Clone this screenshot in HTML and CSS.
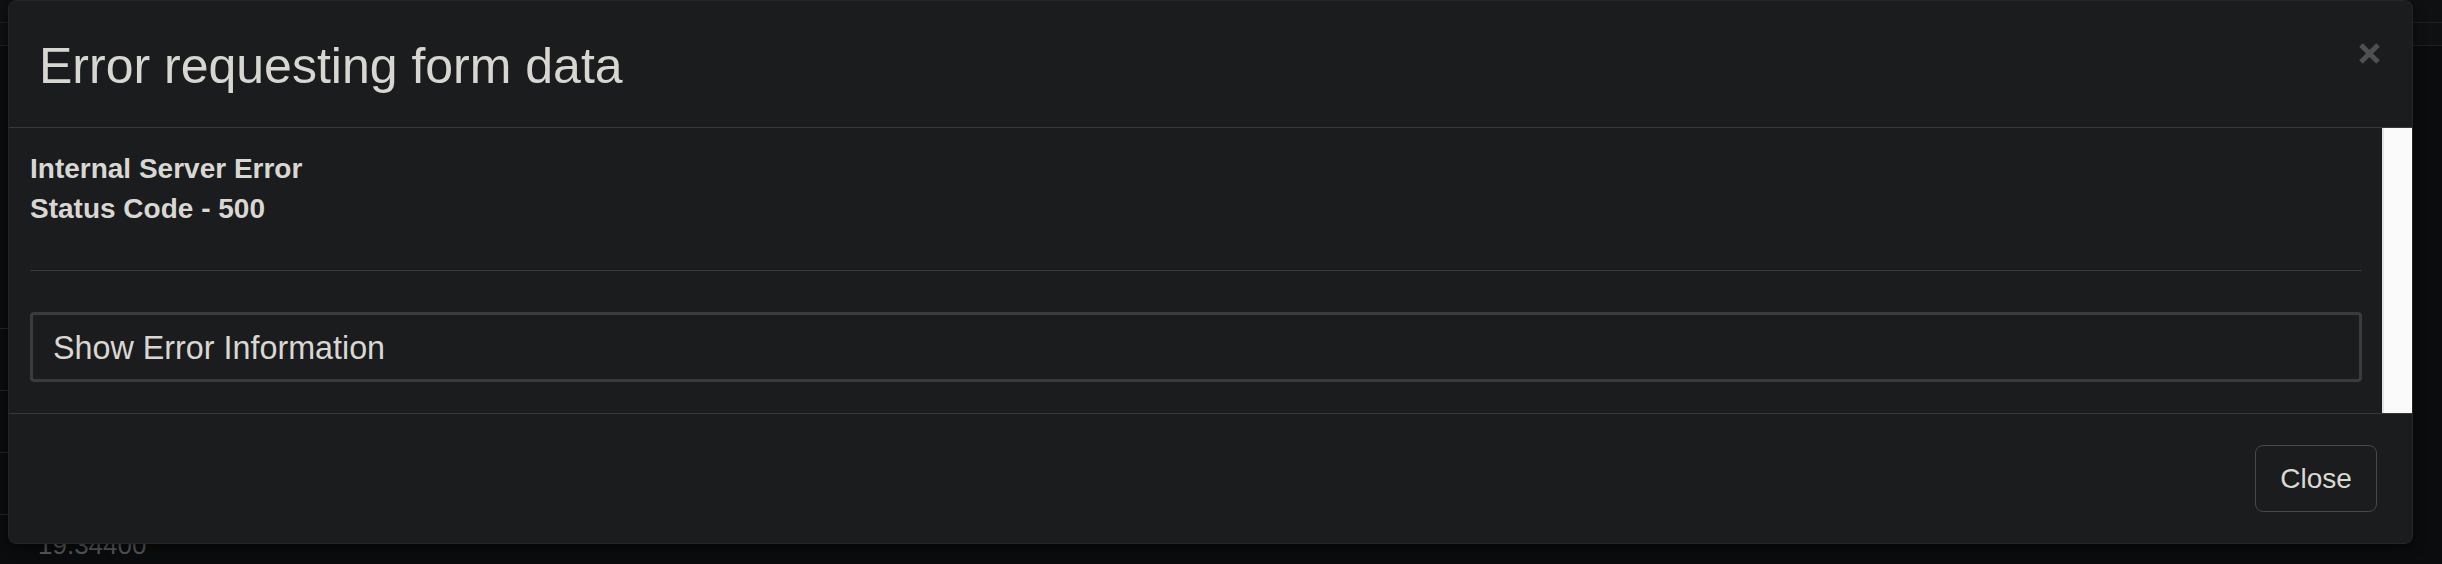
FILE: index.html
```html
<!DOCTYPE html>
<html>
<head>
<meta charset="utf-8">
<link rel="stylesheet" href="styles.css">
</head>
<body>
<div class="page">
  <div class="topbar">
    <div class="topbar-row"></div>
    <div class="topbar-row"></div>
  </div>
  <div class="table">
    <div class="spacer"></div>
    <div class="row"></div>
    <div class="row"></div>
    <div class="row"></div>
    <div class="row last"><span class="num">19.34400</span></div>
  </div>
</div>

<div class="modal">
  <div class="modal-header">
    <h4 class="modal-title">Error requesting form data</h4>
    <button class="close" aria-label="Close">
      <svg width="21" height="21" viewBox="0 0 21 21"><path d="M2 2 L19 19 M19 2 L2 19" stroke="#4f5052" stroke-width="5" fill="none"/></svg>
    </button>
  </div>
  <div class="modal-body">
    <div class="body-content">
      <p class="msg">Internal Server Error<br>Status Code - 500</p>
      <hr class="divider">
      <div class="info-box">Show Error Information</div>
    </div>
    <div class="scroll-track"></div>
  </div>
  <div class="modal-footer">
    <button class="btn">Close</button>
  </div>
</div>
</body>
</html>
```
FILE: styles.css
```css
html, body {
  margin: 0;
  padding: 0;
  background: #0b0c0d;
  font-family: "Liberation Sans", Arial, sans-serif;
  overflow: hidden;
}

.page {
  width: 2442px;
  height: 564px;
}

.topbar {
  background: #0f1011;
}

.topbar-row {
  height: 22px;
  border-bottom: 1px solid #1e1f21;
}

.table {
  width: 700px;
}

.spacer {
  height: 282px;
  border-bottom: 1px solid #252628;
}

.row {
  height: 61px;
  border-bottom: 1px solid #252628;
}

.row.last {
  border-bottom: none;
  padding: 15px 0 0 38px;
  box-sizing: border-box;
  height: 60px;
}

.num {
  font-size: 26px;
  color: #58595b;
  line-height: 30px;
}

.modal {
  position: absolute;
  top: 0;
  left: 8px;
  width: 2405px;
  box-sizing: border-box;
  background: #1b1c1e;
  border: 1px solid #242527;
  border-radius: 8px;
  box-shadow: 0 4px 12px rgba(0, 0, 0, 0.5);
  overflow: hidden;
}

.modal-header {
  display: flex;
  justify-content: space-between;
  align-items: flex-start;
  padding: 39px 32px 34px 30px;
  border-bottom: 1px solid #37383a;
}

.modal-title {
  margin: 0;
  font-size: 50px;
  line-height: 53px;
  font-weight: 400;
  color: #d8d6d0;
}

.close {
  margin-top: 3px;
  padding: 0;
  border: 0;
  background: transparent;
  width: 21px;
  height: 21px;
  display: block;
}

.close svg {
  display: block;
}

.modal-body {
  display: flex;
  border-bottom: 1px solid #37383a;
}

.body-content {
  flex: 1;
  padding: 21px 20px 31px 21px;
}

.msg {
  margin: 0;
  font-size: 28px;
  line-height: 40px;
  font-weight: 700;
  color: #d9d7d2;
}

.divider {
  margin: 41px 0;
  border: 0;
  height: 1px;
  background: #3a3b3d;
}

.info-box {
  height: 70px;
  box-sizing: border-box;
  border: 3px solid #3a3b3e;
  border-radius: 4px;
  padding: 2px 20px 0;
  font-size: 32.3px;
  line-height: 62px;
  color: #d9d7d2;
}

.scroll-track {
  width: 28px;
  background: #fafafa;
  border-left: 2px solid #e4e4e4;
}

.modal-footer {
  display: flex;
  justify-content: flex-end;
  padding: 31px 35px 31px;
}

.btn {
  height: 67px;
  width: 122px;
  box-sizing: border-box;
  border: 1.5px solid #47484b;
  border-radius: 8px;
  background: #1b1c1e;
  color: #dad8d2;
  font-family: "Liberation Sans", Arial, sans-serif;
  font-size: 28px;
  padding: 0;
  display: flex;
  align-items: center;
  justify-content: center;
}
```
